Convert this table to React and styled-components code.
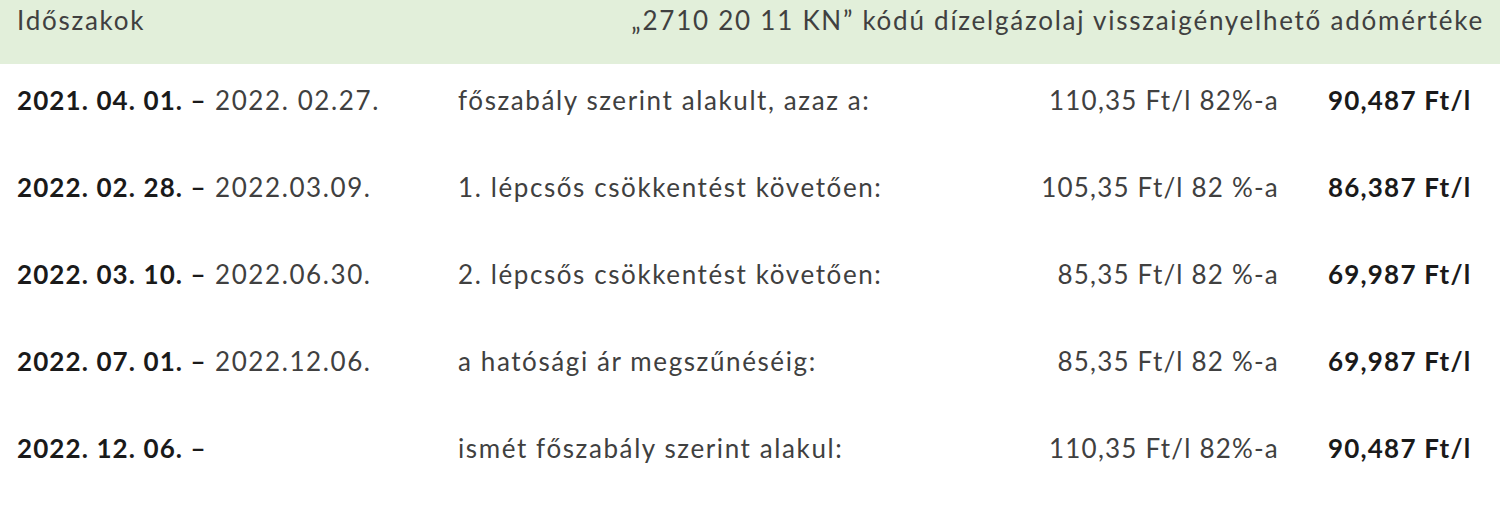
import React from "react";
import styled, { createGlobalStyle } from "styled-components";

const GlobalStyle = createGlobalStyle`
  html, body {
    margin: 0;
    padding: 0;
    background: #ffffff;
  }
  body {
    font-family: Lato, "Open Sans", "Liberation Sans", sans-serif;
  }
`;

const Table = styled.div`
  width: 1500px;
  height: 517px;
  background: #ffffff;
  color: #404040;
  font-size: 26px;
  letter-spacing: 1.6px;
`;

const Header = styled.div`
  height: 64px;
  box-sizing: border-box;
  padding: 2px 16px 0 17px;
  background: #e2efda;
  display: flex;
  justify-content: space-between;
  align-items: flex-start;
  line-height: 36px;
  letter-spacing: 1.75px;
`;

const Row = styled.div`
  display: grid;
  grid-template-columns: 441px 570px 300px 172px;
  height: 87px;
  box-sizing: border-box;
  padding: 18px 0 0 17px;
  line-height: 36px;
  white-space: nowrap;
`;

const Period = styled.div``;

const Strong = styled.span`
  font-weight: 700;
  color: #1a1a1a;
  letter-spacing: 1.1px;
`;

const Amount = styled.div`
  text-align: right;
  padding-right: 49px;
  letter-spacing: 1.2px;
`;

const Rate = styled.div`
  font-weight: 700;
  color: #1a1a1a;
  letter-spacing: 1.2px;
`;

const rows = [
  {
    from: "2021. 04. 01. –",
    to: " 2022. 02.27.",
    desc: "főszabály szerint alakult, azaz a:",
    amount: "110,35 Ft/l 82%-a",
    rate: "90,487 Ft/l",
  },
  {
    from: "2022. 02. 28. –",
    to: " 2022.03.09.",
    desc: "1. lépcsős csökkentést követően:",
    amount: "105,35 Ft/l 82 %-a",
    rate: "86,387 Ft/l",
  },
  {
    from: "2022. 03. 10. –",
    to: " 2022.06.30.",
    desc: "2. lépcsős csökkentést követően:",
    amount: "85,35 Ft/l 82 %-a",
    rate: "69,987 Ft/l",
  },
  {
    from: "2022. 07. 01. –",
    to: " 2022.12.06.",
    desc: "a hatósági ár megszűnéséig:",
    amount: "85,35 Ft/l 82 %-a",
    rate: "69,987 Ft/l",
  },
  {
    from: "2022. 12. 06. –",
    to: "",
    desc: "ismét főszabály szerint alakul:",
    amount: "110,35 Ft/l 82%-a",
    rate: "90,487 Ft/l",
  },
];

export default function App() {
  return (
    <>
      <GlobalStyle />
      <Table>
        <Header>
          <span>Időszakok</span>
          <span>„2710 20 11 KN” kódú dízelgázolaj visszaigényelhető adómértéke</span>
        </Header>
        {rows.map((r) => (
          <Row key={r.from}>
            <Period>
              <Strong>{r.from}</Strong>
              {r.to}
            </Period>
            <div>{r.desc}</div>
            <Amount>{r.amount}</Amount>
            <Rate>{r.rate}</Rate>
          </Row>
        ))}
      </Table>
    </>
  );
}
